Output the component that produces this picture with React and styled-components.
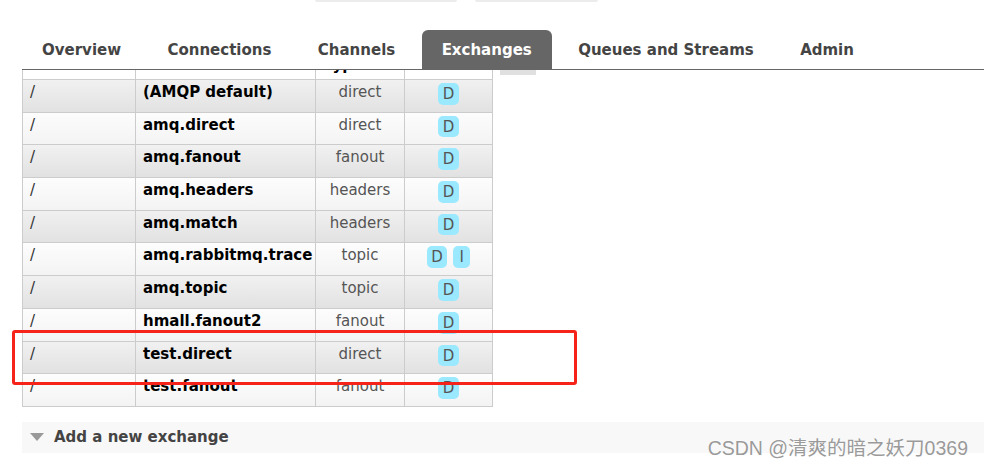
import React from "react";
import styled, { createGlobalStyle } from "styled-components";

const GlobalStyle = createGlobalStyle`
  body {
    margin: 0;
    background: #fff;
    font-family: "DejaVu Sans", Verdana, sans-serif;
  }
`;

const Page = styled.div`
  position: relative;
  min-height: 467px;
  overflow: hidden;
`;

const Header = styled.header`
  position: fixed;
  top: 0;
  left: 0;
  right: 0;
  height: 70px;
  background: #fff;
  z-index: 2;
`;

const StatusRow = styled.div`
  display: flex;
  gap: 18px;
  padding-left: 315px;
  height: 2px;
`;

const StatusBox = styled.div`
  width: ${(p) => p.$width}px;
  height: 2px;
  background: #ececec;
  border-radius: 0 0 4px 4px;
`;

const Tabs = styled.ul`
  display: flex;
  gap: 6.4px;
  list-style: none;
  margin: 28px 0 0 22px;
  padding: 0;
  border-bottom: 1px solid #666;
`;

const Tab = styled.li`
  height: 39px;
  line-height: 40px;
  padding: 0 20px;
  font-size: 15px;
  font-weight: bold;
  color: ${(p) => (p.$active ? "#fff" : "#444")};
  background: ${(p) => (p.$active ? "#666" : "transparent")};
  border-radius: 6px 6px 0 0;
`;

const Main = styled.main`
  padding: 46px 0 0 22px;
`;

const TableRow = styled.div`
  display: flex;
  align-items: flex-start;
  gap: 7px;
`;

const Table = styled.table`
  border-collapse: collapse;
  table-layout: fixed;
  width: 470px;
  font-size: 15px;
  line-height: 18px;
`;

const Th = styled.th`
  height: 22px;
  padding: 5px 8px;
  text-align: left;
  vertical-align: bottom;
  font-weight: bold;
  color: #000;
  background: #fff;
  border: 1px solid #ccc;
  white-space: nowrap;
  overflow: hidden;
`;

const Tr = styled.tr`
  background: ${(p) =>
    p.$odd
      ? "linear-gradient(to bottom, #f1f1f1, #e1e1e1)"
      : "linear-gradient(to bottom, #fdfdfd, #f3f3f3)"};
`;

const Td = styled.td`
  height: 21.7px;
  padding: 3px 7px 7px;
  vertical-align: top;
  border: 1px solid #ccc;
  text-align: ${(p) => p.$align || "left"};
  color: ${(p) => p.$color || "#333"};
  font-weight: ${(p) => (p.$bold ? "bold" : "normal")};
  white-space: nowrap;
`;

const Badges = styled.div`
  display: flex;
  justify-content: center;
  gap: 6px;
`;

const Badge = styled.span`
  min-width: 17px;
  height: 21.7px;
  line-height: 22px;
  padding: 0 4.5px;
  box-sizing: border-box;
  text-align: center;
  background: #9ae9ff;
  color: #555;
  border-radius: 5px;
  font-size: 15px;
`;

const ColumnToggle = styled.span`
  margin-top: 10px;
  width: 36px;
  height: 19px;
  line-height: 17px;
  background: #e0e0e0;
  font-size: 12px;
  text-align: center;
  color: #c00;
`;

const Blue = styled.span`
  color: #06c;
`;

const Section = styled.div`
  display: flex;
  align-items: center;
  gap: 10px;
  height: 31px;
  margin-top: 15px;
  padding-left: 8px;
  background: #f8f8f8;
`;

const Arrow = styled.span`
  width: 0;
  height: 0;
  border-left: 7px solid transparent;
  border-right: 7px solid transparent;
  border-top: 8px solid #999;
`;

const SectionTitle = styled.h2`
  margin: 0;
  font-size: 15px;
  font-weight: bold;
  color: #444;
`;

const Highlight = styled.div`
  position: absolute;
  left: 12px;
  top: 330px;
  width: 565px;
  height: 55px;
  box-sizing: border-box;
  border: 3px solid #f5231a;
  border-radius: 3px;
  z-index: 1;
`;

const Watermark = styled.div`
  position: absolute;
  right: 16px;
  bottom: 6px;
  font-family: "Liberation Sans", "Noto Sans CJK SC", sans-serif;
  font-size: 19.5px;
  color: #9a9a9a;
  text-shadow: 0 0 2px #fff, 0 0 1px #fff;
  z-index: 3;
`;

const tabs = ["Overview", "Connections", "Channels", "Exchanges", "Queues and Streams", "Admin"];

const exchanges = [
  { name: "(AMQP default)", type: "direct", features: ["D"] },
  { name: "amq.direct", type: "direct", features: ["D"] },
  { name: "amq.fanout", type: "fanout", features: ["D"] },
  { name: "amq.headers", type: "headers", features: ["D"] },
  { name: "amq.match", type: "headers", features: ["D"] },
  { name: "amq.rabbitmq.trace", type: "topic", features: ["D", "I"] },
  { name: "amq.topic", type: "topic", features: ["D"] },
  { name: "hmall.fanout2", type: "fanout", features: ["D"] },
  { name: "test.direct", type: "direct", features: ["D"] },
  { name: "test.fanout", type: "fanout", features: ["D"] },
];

function App() {
  return (
    <Page>
      <GlobalStyle />
      <Header>
        <StatusRow>
          <StatusBox $width={142} />
          <StatusBox $width={123} />
        </StatusRow>
        <Tabs>
          {tabs.map((t) => (
            <Tab key={t} $active={t === "Exchanges"}>
              {t}
            </Tab>
          ))}
        </Tabs>
      </Header>

      <Main>
        <TableRow>
          <Table>
            <colgroup>
              <col style={{ width: 113 }} />
              <col style={{ width: 180 }} />
              <col style={{ width: 89 }} />
              <col style={{ width: 88 }} />
            </colgroup>
            <thead>
              <tr>
                <Th>Virtual host</Th>
                <Th>Name</Th>
                <Th>Type</Th>
                <Th>Features</Th>
              </tr>
            </thead>
            <tbody>
              {exchanges.map((ex, i) => (
                <Tr key={ex.name} $odd={i % 2 === 0}>
                  <Td>/</Td>
                  <Td $bold $color="#000">
                    {ex.name}
                  </Td>
                  <Td $align="center" $color="#555">
                    {ex.type}
                  </Td>
                  <Td>
                    <Badges>
                      {ex.features.map((f) => (
                        <Badge key={f}>{f}</Badge>
                      ))}
                    </Badges>
                  </Td>
                </Tr>
              ))}
            </tbody>
          </Table>
          <ColumnToggle>
            +<Blue>/</Blue>-
          </ColumnToggle>
        </TableRow>

        <Section>
          <Arrow />
          <SectionTitle>Add a new exchange</SectionTitle>
        </Section>
      </Main>

      <Highlight />
      <Watermark>CSDN @清爽的暗之妖刀0369</Watermark>
    </Page>
  );
}

export default App;
